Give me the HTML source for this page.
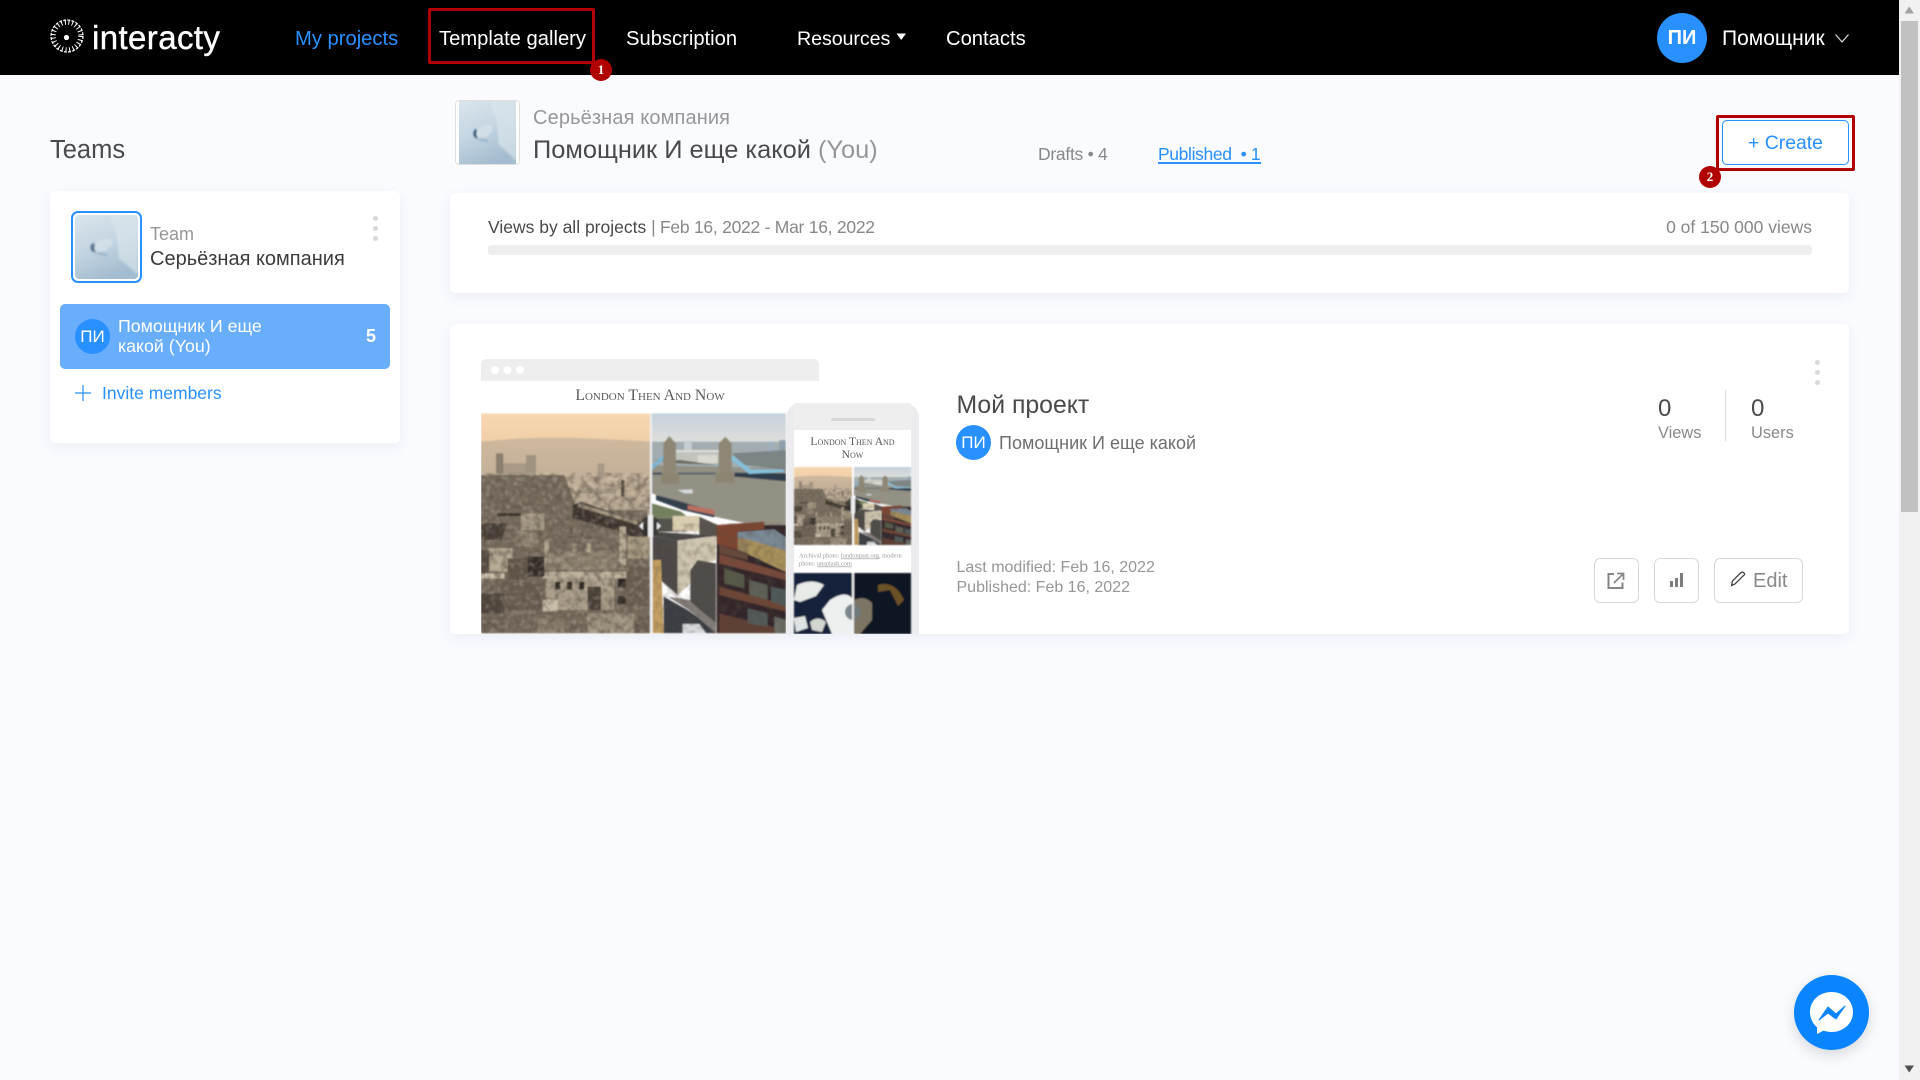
<!DOCTYPE html>
<html lang="en">
<head>
<meta charset="utf-8">
<title>Interacty</title>
<style>
html,body{margin:0;padding:0;width:1920px;height:1080px;overflow:hidden;background:#f9fbff;font-family:"Liberation Sans","Noto Sans CJK SC",sans-serif;}
.t{position:absolute;white-space:nowrap;line-height:24px;height:24px;}
.abs{position:absolute;box-sizing:border-box;}
.card{position:absolute;background:#fff;border-radius:5px;box-shadow:0 4px 14px rgba(40,50,90,.07);}
.circ{position:absolute;border-radius:50%;background:#2990ff;color:#fff;text-align:center;}
.dot{position:absolute;width:5px;height:5px;border-radius:50%;background:#d8d8d8;}
.red{position:absolute;box-sizing:border-box;border:3px solid #b00000;border-radius:2px;}
.badge{position:absolute;width:22px;height:22px;border-radius:50%;background:#b00000;color:#fff;font:bold 13px/22px "Liberation Serif",serif;text-align:center;}
.btn{position:absolute;box-sizing:border-box;height:45px;border:1px solid #d8d8d8;border-radius:6px;background:#fff;}
</style>
</head>
<body>
<!-- header -->
<div class="abs" style="left:0;top:0;width:1899px;height:75px;background:#000"></div>
<svg class="abs" style="left:48px;top:17px" width="38" height="38" viewBox="0 0 38 38">
  <circle cx="19" cy="19" r="13.5" fill="none" stroke="#fff" stroke-width="4.5" stroke-dasharray="1 2.6"/>
  <circle cx="19" cy="19" r="16" fill="none" stroke="#fff" stroke-width="1.2" stroke-dasharray="3 1.2"/>
  <path d="M26 3 L36 12 L36 3Z" fill="#000"/>
  <circle cx="18.5" cy="20.5" r="2.6" fill="#fff"/>
</svg>
<div class="t" style="left:92px;top:22px;height:32px;line-height:32px;font-size:33px;color:#fff;letter-spacing:.4px;-webkit-text-stroke:.4px #fff">interacty</div>
<div class="t" style="left:295px;top:27px;font-size:20.2px;color:#2990ff">My projects</div>
<div class="t" style="left:439px;top:27px;font-size:20.2px;color:#fff">Template gallery</div>
<div class="t" style="left:626px;top:27px;font-size:20.2px;color:#fff">Subscription</div>
<div class="t" style="left:797px;top:27px;font-size:19.7px;color:#fff;letter-spacing:-.1px">Resources</div>
<svg class="abs" style="left:896px;top:33px" width="11" height="8"><path d="M0.5 0.5H10L5.2 7Z" fill="#fff"/></svg>
<div class="t" style="left:946px;top:27px;font-size:20.2px;color:#fff">Contacts</div>
<div class="circ" style="left:1657px;top:13px;width:50px;height:50px;font:bold 20px/50px 'Liberation Sans',sans-serif">ПИ</div>
<div class="t" style="left:1722px;top:27px;font-size:21px;color:#fff">Помощник</div>
<svg class="abs" style="left:1834px;top:33px" width="16" height="11"><path d="M1.5 1.5L8 9L14.5 1.5" fill="none" stroke="#ddd" stroke-width="1.2"/></svg>
<div class="red" style="left:428px;top:8px;width:167px;height:56px"></div>
<div class="badge" style="left:590px;top:59px">1</div>

<!-- scrollbar -->
<div class="abs" style="left:1899px;top:0;width:21px;height:1080px;background:#f1f1f1"></div>
<div class="abs" style="left:1901px;top:21px;width:17px;height:491px;background:#c1c1c1"></div>
<svg class="abs" style="left:1904px;top:6px" width="11" height="8"><path d="M0.5 7.5H10L5.2 .5Z" fill="#a3a3a3"/></svg>
<svg class="abs" style="left:1904px;top:1065px" width="11" height="8"><path d="M0.5 .5H10L5.2 7.5Z" fill="#505050"/></svg>

<svg width="0" height="0" style="position:absolute">
  <defs>
    <linearGradient id="iceg" x1="0.1" y1="0" x2=".5" y2="1"><stop offset="0" stop-color="#d9e4ec"/><stop offset=".5" stop-color="#c4d5e2"/><stop offset="1" stop-color="#a3bccf"/></linearGradient>
    <filter id="soft" x="-10%" y="-10%" width="120%" height="120%"><feGaussianBlur stdDeviation="1"/></filter>
    <g id="ice">
      <rect width="63" height="64" fill="url(#iceg)"/>
      <g filter="url(#soft)">
        <path d="M34 0H63V60L50 48L44 44L42 20Z" fill="#dbe6ed" opacity=".65"/>
        <path d="M17 32Q20 27 30 24L37 24L37 30L30 36L22 37Z" fill="#d6e2ea" opacity=".8"/>
        <path d="M18 28Q14 32 17 36L21 38L19 33L20 29Z" fill="#3f5e7a"/>
        <path d="M22 38L32 40" stroke="#7fa0ba" stroke-width="1.2" fill="none"/>
      </g>
    </g>
  </defs>
</svg>

<!-- left column -->
<div class="t" style="left:50px;top:136px;height:28px;line-height:28px;font-size:25.5px;color:#4a4a4a">Teams</div>
<div class="card" style="left:50px;top:191px;width:350px;height:252px"></div>
<div class="abs" style="left:71px;top:211px;width:71px;height:72px;border:2px solid #2990ff;border-radius:7px;background:#fff;padding:2px">
  <svg width="63" height="64" style="display:block;border-radius:4px" viewBox="0 0 63 64"><use href="#ice"/></svg>
</div>
<div class="t" style="left:150px;top:222px;font-size:18px;color:#979797">Team</div>
<div class="t" style="left:150px;top:247px;font-size:20px;color:#3c3c3c">Серьёзная компания</div>
<div class="dot" style="left:373px;top:216px"></div>
<div class="dot" style="left:373px;top:226px"></div>
<div class="dot" style="left:373px;top:236px"></div>
<div class="abs" style="left:60px;top:304px;width:330px;height:65px;background:#69aefc;border-radius:5px"></div>
<div class="circ" style="left:75px;top:319px;width:35px;height:35px;font:17px/35px 'Liberation Sans',sans-serif">ПИ</div>
<div class="t" style="left:118px;top:316px;height:20px;line-height:20px;font-size:17.8px;color:#fff">Помощник И еще</div>
<div class="t" style="left:118px;top:336px;height:20px;line-height:20px;font-size:17.8px;color:#fff">какой (You)</div>
<div class="t" style="left:366px;top:324px;font-size:18px;color:#fff;font-weight:bold">5</div>
<svg class="abs" style="left:75px;top:385px" width="16" height="16"><path d="M8 0V16M0 8H16" stroke="#2990ff" stroke-width="1.2"/></svg>
<div class="t" style="left:102px;top:381px;font-size:17.5px;color:#2990ff">Invite members</div>

<!-- top middle -->
<div class="abs" style="left:455px;top:100px;width:65px;height:65px;border:1px solid #dedede;border-radius:4px;background:#fff;padding:0 3px;overflow:hidden">
  <svg width="57" height="64" style="display:block" viewBox="0 0 63 64" preserveAspectRatio="none"><use href="#ice"/></svg>
</div>
<div class="t" style="left:533px;top:106px;font-size:20px;color:#979797;letter-spacing:.13px">Серьёзная компания</div>
<div class="t" style="left:533px;top:136px;height:28px;line-height:28px;font-size:25.4px;color:#4a4a4a">Помощник И еще какой <span style="color:#979797">(You)</span></div>
<div class="t" style="left:1038px;top:142px;font-size:17.5px;color:#888;letter-spacing:-.28px">Drafts • 4</div>
<div class="t" style="left:1158px;top:142px;font-size:17.5px;color:#2990ff;letter-spacing:-.36px">Published &nbsp;• 1</div>
<div class="abs" style="left:1158px;top:162px;width:103px;height:2px;background:#2990ff"></div>
<div class="abs" style="left:1722px;top:120px;width:127px;height:45px;border:1px solid #2990ff;border-radius:5px;background:#fff;text-align:center;font-size:19.4px;line-height:45px;color:#2990ff">+ Create</div>
<div class="red" style="left:1716px;top:115px;width:139px;height:56px"></div>
<div class="badge" style="left:1699px;top:166px">2</div>

<!-- stats card -->
<div class="card" style="left:450px;top:193px;width:1399px;height:100px"></div>
<div class="t" style="left:488px;top:215px;font-size:17.5px;color:#4a4a4a">Views by all projects <span style="color:#888;letter-spacing:-.26px">| Feb 16, 2022 - Mar 16, 2022</span></div>
<div class="t" style="right:108px;top:215px;font-size:17.5px;color:#888">0 of 150 000 views</div>
<div class="abs" style="left:488px;top:245px;width:1324px;height:10px;background:#eee;border-radius:3px"></div>

<!-- project card -->
<div class="card" style="left:450px;top:324px;width:1399px;height:310px"></div>
<svg class="abs" style="left:481px;top:359px" width="438" height="275" viewBox="481 359 438 275">
  <defs>
    <filter id="bl" x="-5%" y="-5%" width="110%" height="110%"><feGaussianBlur stdDeviation="0.9"/></filter>
    <filter id="nz" x="0" y="0" width="100%" height="100%">
      <feTurbulence type="fractalNoise" baseFrequency="0.05" numOctaves="3" seed="7"/>
      <feColorMatrix values="0 0 0 0 0.1  0 0 0 0 0.08  0 0 0 0 0.06  3 0 0 0 -1.25"/>
    </filter>
    <filter id="nzl" x="0" y="0" width="100%" height="100%">
      <feTurbulence type="fractalNoise" baseFrequency="0.07" numOctaves="3" seed="21"/>
      <feColorMatrix values="0 0 0 0 0.85  0 0 0 0 0.8  0 0 0 0 0.7  0 3 0 0 -1.45"/>
    </filter>
    <linearGradient id="sky1" x1="0" y1="0" x2="0" y2="1"><stop offset="0" stop-color="#f6d7b0"/><stop offset="1" stop-color="#f0cfa8"/></linearGradient>
    <linearGradient id="hill" x1="0" y1="0" x2="0" y2="1"><stop offset="0" stop-color="#cfb89d"/><stop offset=".3" stop-color="#bcab95"/><stop offset="1" stop-color="#6e6456"/></linearGradient>
    <linearGradient id="sky2" x1="0" y1="0" x2="0" y2="1"><stop offset="0" stop-color="#c4d0da"/><stop offset="1" stop-color="#dfe0dc"/></linearGradient>
    <clipPath id="cL"><rect x="0" y="10" width="507" height="660"/></clipPath>
    <clipPath id="cR"><rect x="513" y="10" width="402" height="660"/></clipPath>
    <g id="gL">
      <g clip-path="url(#cL)">
      <rect x="0" y="10" width="507" height="90" fill="url(#sky1)"/>
      <path d="M0 95Q150 78 320 85T507 95V670H0Z" fill="url(#hill)"/>
      <rect x="45" y="160" width="120" height="35" fill="#a89a86"/>
      <rect x="45" y="130" width="22" height="60" fill="#8a7e6e"/>
      <rect x="135" y="135" width="30" height="55" fill="#a09480"/>
      <rect x="350" y="160" width="20" height="45" fill="#a69985"/>
      <path d="M390 215L507 215V270L440 240Z" fill="#b9a88f"/>
      <rect x="420" y="210" width="10" height="50" fill="#4b4238"/>
      <path d="M0 195H250L290 300L500 300L507 670H0Z" fill="#766a5c"/>
      <path d="M0 340H80L60 390H0Z" fill="#463d34"/>
      <path d="M275 285L300 275L470 335L510 350V405L420 365L275 325Z" fill="#3a322a"/>
      <path d="M290 235H405V250H290Z" fill="#a1947f"/>
      <path d="M295 280L470 335V345L290 290Z" fill="#a3967f"/>
      <path d="M120 310H190V360H120Z" fill="#a59883"/>
      <path d="M105 365H170V410H105Z" fill="#8e8170"/>
      <rect x="190" y="390" width="14" height="85" fill="#b3a690"/>
      <rect x="275" y="400" width="12" height="60" fill="#a89b86"/>
      <rect x="315" y="400" width="14" height="65" fill="#b3a690"/>
      <rect x="415" y="350" width="20" height="115" fill="#b5a893"/>
      <path d="M200 425H320L390 420L435 480H190Z" fill="#8f8371"/>
      <path d="M185 485H440V505H185Z" fill="#bdb09b"/>
      <path d="M195 505H400V600H195Z" fill="#ab9e8a"/>
      <g fill="#2e2821"><rect x="222" y="515" width="16" height="24"/><rect x="258" y="515" width="16" height="24"/><rect x="294" y="515" width="16" height="24"/><rect x="410" y="505" width="24" height="28"/><rect x="410" y="558" width="24" height="24"/><rect x="45" y="452" width="28" height="28"/><rect x="50" y="310" width="70" height="8"/></g>
      <path d="M435 470H507V590H435Z" fill="#6b5f52"/>
      <path d="M440 380H507V445H440Z" fill="#a5987f"/>
      <path d="M20 415H95V485H20Z" fill="#b5a993"/>
      <path d="M80 445H140V510H80Z" fill="#5f5347"/>
      <path d="M0 490H70V505H0Z" fill="#ccc0aa"/>
      <path d="M0 420H25V490H0Z" fill="#534a3f"/>
      <path d="M75 515H190V600H75Z" fill="#6a5d50"/>
      <path d="M140 440H190V500H140Z" fill="#2f2a24"/>
      <path d="M0 550H70V610H0Z" fill="#4d443a"/>
      <path d="M185 570H230V605H185Z" fill="#c9bda8"/>
      <path d="M0 620H70V670H0Z" fill="#6f6356"/>
      <path d="M170 625H250V670H170Z" fill="#8a7d6c"/>
      <path d="M320 610H460V670H320Z" fill="#9d917e"/>
      <path d="M320 530H360V600H320Z" fill="#453c33"/>
      <path d="M460 620H507V670H460Z" fill="#6b5f52"/>
      <rect x="0" y="190" width="507" height="480" filter="url(#nz)" opacity=".6"/>
      <rect x="0" y="190" width="507" height="480" filter="url(#nzl)" opacity=".25"/>
      </g>
    </g>
    <g id="gR">
      <g clip-path="url(#cR)">
      <rect x="513" y="10" width="402" height="90" fill="url(#sky2)"/>
      <rect x="513" y="95" width="402" height="90" fill="#a3adb0"/>
      <rect x="610" y="92" width="22" height="30" fill="#c6cdd0"/>
      <rect x="895" y="90" width="18" height="40" fill="#8da0ac"/>
      <rect x="860" y="95" width="18" height="30" fill="#9db0bc"/>
      <path d="M585 130H713V160H585Z" fill="#c2c4bc"/>
      <path d="M650 135H710V160H650Z" fill="#dad8cf"/>
      <path d="M780 138H830V155H780Z" fill="#ccccc4"/>
      <path d="M513 165L915 175V365L700 320L513 250Z" fill="#939084"/>
      <path d="M513 150L600 150L705 165L585 160Z" fill="#6b6d60"/>
      <path d="M752 130L915 120V180L790 165Z" fill="#7b8484"/>
      <path d="M760 188L915 190V214L760 200Z" fill="#2d3c4c"/>
      <path d="M513 165L547 135V150L513 180Z" fill="#7cb4d2"/>
      <path d="M752 135L810 178L905 178L912 186L805 192L752 150Z" fill="#86bfd9"/>
      <rect x="513" y="188" width="30" height="6" fill="#3d4a57"/>
      <rect x="590" y="188" width="118" height="5" fill="#4e5c68"/>
      <rect x="585" y="120" width="130" height="8" fill="#dcdcd5"/>
      <path d="M547 100L565 78L585 100V195H547Z" fill="#8f8776"/>
      <path d="M713 100L733 80L752 100V195H713Z" fill="#8f8776"/>
      <path d="M541 192H595V222H541Z" fill="#8c8571"/>
      <path d="M703 188H760V218H703Z" fill="#8c8571"/>
      <path d="M590 240L635 238V250L610 250Z" fill="#d6d9dc"/>
      <path d="M525 255L600 275L700 305V322L605 300L525 270Z" fill="#34404e"/>
      <path d="M620 285L700 300V315L620 298Z" fill="#bb6f60"/>
      <path d="M513 280L600 305L625 325L513 325Z" fill="#73805f"/>
      <path d="M513 325H620V365H513Z" fill="#54524d"/>
      <path d="M575 318L655 318V365L575 362Z" fill="#d9ceb0"/>
      <path d="M655 320L710 345V380H655Z" fill="#5a5350"/>
      <path d="M515 365L705 378L590 392L515 378Z" fill="#4a4745"/>
      <path d="M590 392L705 378V450L630 470V520L590 555Z" fill="#cfc6b0"/>
      <path d="M515 378L590 392V555L515 490Z" fill="#4d4a47"/>
      <path d="M515 450H540L548 670H515Z" fill="#c49f62"/>
      <path d="M548 560L620 600L705 660V670H548Z" fill="#3a3e44"/>
      <path d="M560 560L628 570L705 640V670L625 600Z" fill="#857f7c"/>
      <path d="M628 480L650 450L705 460V640L628 575Z" fill="#4f4d4b"/>
      <path d="M605 642H655L675 670H605Z" fill="#d9dde0"/>
      <rect x="707" y="345" width="208" height="325" fill="#33262a"/>
      <path d="M707 345L850 335V358L770 365V420L707 402Z" fill="#7e4530"/>
      <path d="M770 366L880 358L915 382V425L770 385Z" fill="#7a8996"/>
      <path d="M770 382L800 388V430L770 420Z" fill="#98825a"/>
      <path d="M800 388L915 422V486L800 432Z" fill="#aa925c"/>
      <path d="M715 405L800 432V450L715 430Z" fill="#68493c"/>
      <path d="M715 432L915 490V510L715 460Z" fill="#7a4a3a"/>
      <path d="M715 530L915 585V605L715 555Z" fill="#6f4536"/>
      <path d="M715 610L915 660V670H715V630Z" fill="#5f3f34"/>
      <path d="M730 475L790 495V535L730 520Z" fill="#585a4a"/>
      <path d="M805 510L860 525V570L805 555Z" fill="#5e6258"/>
      <path d="M870 530L915 540V590L870 575Z" fill="#4f5a5a"/>
      <path d="M800 595L860 610V650L800 640Z" fill="#525a58"/>
      <path d="M880 620L915 630V670H880Z" fill="#6a6e66"/>
      <rect x="515" y="340" width="400" height="330" filter="url(#nz)" opacity=".3"/>
      </g>
    </g>
  </defs>

  <path d="M486 359H814a5 5 0 0 1 5 5V381H481V364a5 5 0 0 1 5-5Z" fill="#eee"/>
  <circle cx="495" cy="370" r="4" fill="#fff"/><circle cx="507.500" cy="370" r="4" fill="#fff"/><circle cx="520" cy="370" r="4" fill="#fff"/>
  <text x="650" y="400" text-anchor="middle" font-family="Liberation Serif,serif" font-size="15.800" fill="#5a5a5a" style="font-variant:small-caps">London Then And Now</text>

  <g filter="url(#bl)">
    <g transform="translate(481 410) scale(.3333)"><use href="#gL"/><rect x="507" y="10" width="6" height="660" fill="#eee"/><use href="#gR"/></g>
    <circle cx="650" cy="526" r="10" fill="#222" opacity=".6"/>
    <rect x="648" y="515" width="5" height="22" fill="#eee"/>
    <path d="M643 522v8l-4-4ZM657 522v8l4-4Z" fill="#eee"/>
  </g>

  <!-- phone -->
  <path d="M786 634V418a15 15 0 0 1 15-15H904a15 15 0 0 1 15 15V634H911V403H794V634Z" fill="#ececee"/>
  <rect x="794" y="403" width="117" height="231" fill="#fff"/>
  <rect x="794" y="403" width="117" height="27" fill="#eee"/>
  <rect x="831" y="418" width="44" height="3" rx="1.500" fill="#d6d6d6"/>
  <text x="852.500" y="445" text-anchor="middle" font-family="Liberation Serif,serif" font-size="11.500" fill="#5a5a5a" style="font-variant:small-caps">London Then And</text>
  <text x="852.500" y="458" text-anchor="middle" font-family="Liberation Serif,serif" font-size="11.500" fill="#5a5a5a" style="font-variant:small-caps">Now</text>
  <g filter="url(#bl)">
    <svg x="794" y="467" width="58" height="78" viewBox="0 10 507 660" preserveAspectRatio="none"><use href="#gL"/></svg>
    <svg x="854" y="467" width="57" height="78" viewBox="513 10 402 660" preserveAspectRatio="none"><use href="#gR"/></svg>
    <circle cx="853" cy="505" r="7.500" fill="#222" opacity=".6"/>
    <rect x="851" y="497" width="4" height="16" fill="#eee"/>
    <rect x="794" y="573" width="58" height="61" fill="#12233a"/>
    <path d="M797 585Q812 578 824 585L816 596L800 602L794 600Z" fill="#e9ebe9"/>
    <path d="M830 600Q845 590 852 598V634H832L822 610Z" fill="#eef0ef"/>
    <path d="M794 618L805 616L808 628L796 632Z" fill="#dfe3e3"/>
    <path d="M810 622Q818 615 826 622L822 632L812 630Z" fill="#d3d6cf"/>
    <rect x="854" y="573" width="57" height="61" fill="#0d1524"/>
    <path d="M854 600Q865 595 872 603L872 620L860 634H854Z" fill="#7b7463"/>
    <path d="M878 585Q895 580 904 600L898 606L890 590L878 592Z" fill="#6b5128"/>
    <circle cx="853" cy="612" r="8" fill="#6e7a7e" opacity=".9"/>
    <rect x="852" y="604" width="2" height="16" fill="#ddd"/>
    <rect x="852" y="573" width="2" height="61" fill="#eee" opacity=".8"/>
  </g>
  <text x="799" y="557.500" font-family="Liberation Serif,serif" font-size="6.400" fill="#999">Archival photo: <tspan text-decoration="underline">londonpast.org</tspan>, modern</text>
  <text x="799" y="565.500" font-family="Liberation Serif,serif" font-size="6.400" fill="#999">photo: <tspan text-decoration="underline">unsplash.com</tspan></text>
</svg>

<div class="t" style="left:956.500px;top:391.500px;height:28px;line-height:28px;font-size:24.800px;color:#4a4a4a">Мой проект</div>
<div class="circ" style="left:956px;top:425px;width:35px;height:35px;font:17px/35px 'Liberation Sans',sans-serif">ПИ</div>
<div class="t" style="left:999px;top:431px;font-size:18px;color:#6f6f6f">Помощник И еще какой</div>
<div class="t" style="left:956.500px;top:556px;height:24px;font-size:16px;color:#979797">Last modified: Feb 16, 2022</div>
<div class="t" style="left:956.500px;top:576px;height:24px;font-size:16px;color:#979797">Published: Feb 16, 2022</div>
<div class="dot" style="left:1815px;top:360px"></div>
<div class="dot" style="left:1815px;top:370px"></div>
<div class="dot" style="left:1815px;top:380px"></div>
<div class="t" style="left:1658px;top:397px;font-size:24px;color:#4a4a4a">0</div>
<div class="t" style="left:1658px;top:421px;font-size:16.400px;color:#8a8a8a">Views</div>
<div class="abs" style="left:1725px;top:390px;width:1px;height:51px;background:#ddd"></div>
<div class="t" style="left:1751px;top:397px;font-size:24px;color:#4a4a4a">0</div>
<div class="t" style="left:1751px;top:421px;font-size:16.400px;color:#8a8a8a">Users</div>
<div class="btn" style="left:1594px;top:558px;width:45px"></div>
<svg class="abs" style="left:1606px;top:571px" width="20" height="20" viewBox="0 0 20 20"><path d="M8 3H2.500V17H16.500V11.500" fill="none" stroke="#868686" stroke-width="2"/><path d="M8 12L16.500 3.500M11 2.500H17.500V9" fill="none" stroke="#868686" stroke-width="1.800"/></svg>
<div class="btn" style="left:1654px;top:558px;width:45px"></div>
<svg class="abs" style="left:1669px;top:571px" width="15" height="18" viewBox="0 0 15 18"><path d="M1 10h3v6H1ZM6 7h3v9H6ZM11 2h3v14h-3Z" fill="#7e7e7e"/></svg>
<div class="btn" style="left:1714px;top:558px;width:89px"></div>
<svg class="abs" style="left:1730px;top:570px" width="16" height="18" viewBox="0 0 16 18"><path d="M1.500 15.500L2.500 11L11 2.500Q12.500 1.500 14 3T13.500 5.500L5 14Z" fill="none" stroke="#444" stroke-width="1.300"/></svg>
<div class="t" style="left:1753px;top:569px;font-size:20px;color:#8a8a8a">Edit</div>

<!-- messenger -->
<div class="abs" style="left:1794px;top:975px;width:75px;height:75px;border-radius:50%;background:#0a84ff;box-shadow:0 5px 14px rgba(0,0,0,.14)"></div>
<svg class="abs" style="left:1794px;top:975px" width="75" height="75" viewBox="0 0 75 75">
  <path d="M37.500 17C25.500 17 16 25.500 16 37C16 43.200 18.700 48.500 23 52.200V59L29.500 55.600C32 56.500 34.700 57 37.500 57C49.500 57 59 48.500 59 37S49.500 17 37.500 17Z" fill="#fff"/>
  <path d="M25 45L34 32L42 39L51 31L42 44L34 38Z" fill="#0a84ff" stroke="#0a84ff" stroke-width="1" stroke-linejoin="round"/>
</svg>
</body>
</html>
